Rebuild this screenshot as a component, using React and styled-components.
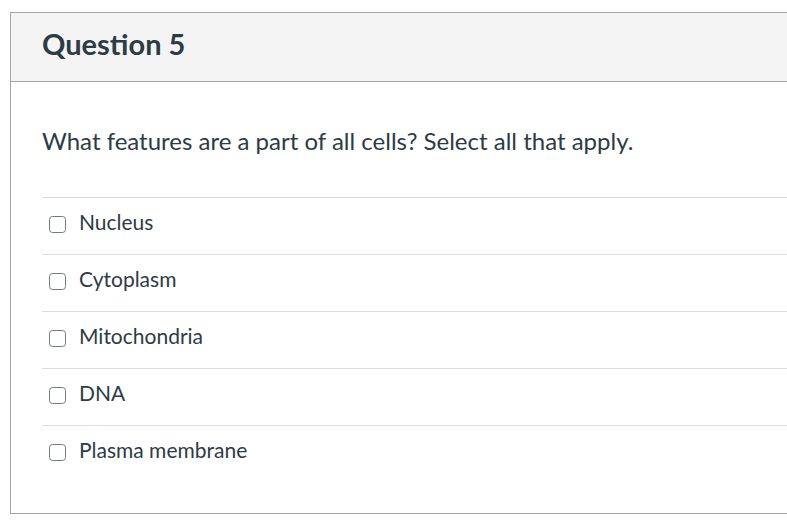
import React from "react";
import styled, { createGlobalStyle } from "styled-components";

const Global = createGlobalStyle`
  html, body { margin: 0; padding: 0; background: #fff; }
  body { font-family: Lato, "Noto Sans", sans-serif; color: #2d3b45; }
`;

const Page = styled.div`
  padding: 12px 0 0 10px;
  overflow: hidden;
`;

const Card = styled.section`
  border: 1px solid #a5a5a5;
  border-right: none;
  width: 800px;
  box-sizing: border-box;
`;

const Header = styled.header`
  height: 62px;
  background: #f4f4f4;
  border-bottom: 1px solid #a5a5a5;
  display: flex;
  align-items: center;
  padding: 0 0 6px 31px;
  box-sizing: content-box;
`;

const Title = styled.h2`
  margin: 0;
  font-size: 29px;
  font-weight: 700;
  line-height: 34px;
  color: #2d3b45;
`;

const Body = styled.div`
  padding: 44px 0 31px 31px;
`;

const Prompt = styled.p`
  margin: 0 0 41px;
  font-size: 24px;
  line-height: 30px;
`;

const List = styled.div`
  display: flex;
  flex-direction: column;
`;

const Row = styled.label`
  display: flex;
  align-items: center;
  height: 57px;
  box-sizing: border-box;
  border-top: 1px solid #dcdcdc;
  padding: 0 0 9px 7px;
  font-size: 21px;
  line-height: 24px;
`;

const Box = styled.span`
  width: 17px;
  height: 17px;
  box-sizing: border-box;
  border: 1.5px solid #737b82;
  border-radius: 3.5px;
  background: #fff;
  margin: 6px 13px 0 0;
  flex: none;
`;

const answers = ["Nucleus", "Cytoplasm", "Mitochondria", "DNA", "Plasma membrane"];

export default function App() {
  return (
    <Page>
      <Global />
      <Card>
        <Header>
          <Title>Question 5</Title>
        </Header>
        <Body>
          <Prompt>What features are a part of all cells? Select all that apply.</Prompt>
          <List>
            {answers.map((a) => (
              <Row key={a}>
                <Box />
                {a}
              </Row>
            ))}
          </List>
        </Body>
      </Card>
    </Page>
  );
}
